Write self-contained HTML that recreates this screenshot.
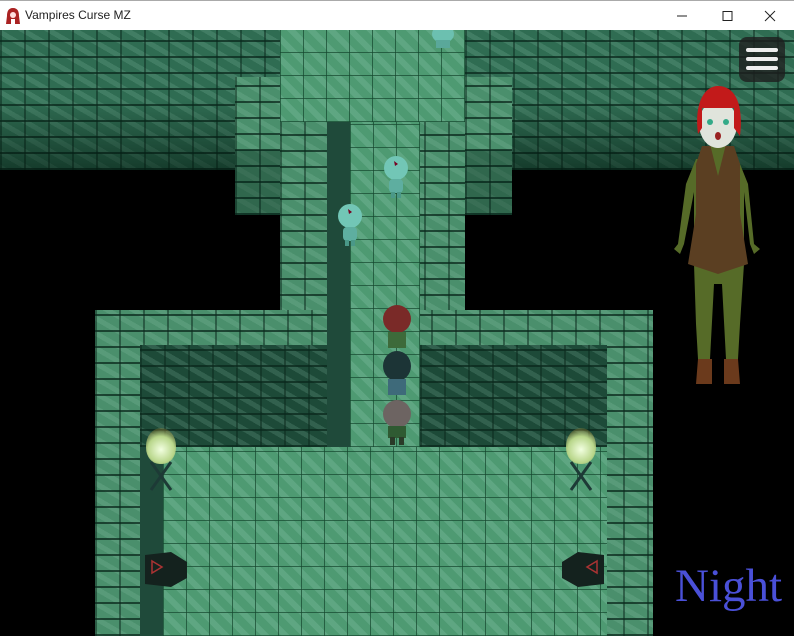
<!DOCTYPE html>
<html><head><meta charset="utf-8"><style>
*{margin:0;padding:0;box-sizing:border-box}
body{width:794px;height:636px;overflow:hidden;background:#000;position:relative;font-family:"Liberation Sans",sans-serif}
.tb{position:absolute;left:0;top:0;width:794px;height:30px;background:#fff;border-top:1px solid #aaa}
.tb span{position:absolute;left:25px;top:7px;font-size:12px;color:#222}
.d{position:absolute}
.wall{background-color:#2f6c52;background-image:
 repeating-linear-gradient(0deg,rgba(10,40,28,.75) 0 2px,transparent 2px 16px),
 repeating-linear-gradient(90deg,rgba(10,40,28,.5) 0 2px,transparent 2px 24px),
 repeating-linear-gradient(30deg,rgba(160,215,190,.16) 0 5px,transparent 5px 13px)}
.wall.dk{background-color:#1d4a38}
.wall.lt{background-color:#4a8f6c}
.floor{background-color:#4e9a72;background-image:
 repeating-linear-gradient(0deg,rgba(20,70,45,.7) 0 1px,transparent 1px 23px),
 repeating-linear-gradient(90deg,rgba(20,70,45,.7) 0 1px,transparent 1px 23px),
 repeating-linear-gradient(45deg,rgba(170,220,200,.18) 0 6px,transparent 6px 14px)}
.sh{background:#1f4a3a}
</style></head><body>
<div class="tb"><svg style="position:absolute;left:6px;top:7px" width="14" height="16"><path d="M7 0C2 0 1 4 1 8L0 16H5V11H9V16H14L13 8C13 4 12 0 7 0Z" fill="#a22"/><circle cx="7" cy="7" r="3" fill="#fdd"/></svg><span>Vampires Curse MZ</span>
<svg style="position:absolute;left:676px;top:8px" width="105" height="14"><path d="M1 7H11" stroke="#222"/><path d="M47 2.5h9v9h-9z" fill="none" stroke="#222"/><path d="M89 2l10 10M99 2l-10 10" stroke="#222"/></svg></div>

<!-- top walls -->
<div class="d wall" style="left:0;top:30px;width:280px;height:140px"></div>
<div class="d wall" style="left:465px;top:30px;width:329px;height:140px"></div>
<div class="d" style="left:0;top:100px;width:280px;height:70px;background:linear-gradient(transparent,rgba(0,20,12,.55))"></div>
<div class="d" style="left:512px;top:100px;width:282px;height:70px;background:linear-gradient(transparent,rgba(0,20,12,.55))"></div>
<div class="d floor" style="left:280px;top:30px;width:185px;height:92px"></div>
<div class="d wall lt" style="left:235px;top:77px;width:45px;height:138px"></div>
<div class="d wall lt" style="left:465px;top:77px;width:47px;height:138px"></div>
<div class="d" style="left:235px;top:150px;width:45px;height:65px;background:rgba(0,30,20,.35)"></div>
<div class="d" style="left:465px;top:150px;width:47px;height:65px;background:rgba(0,30,20,.35)"></div>
<!-- central column -->
<div class="d wall lt" style="left:280px;top:122px;width:185px;height:190px"></div>
<div class="d floor" style="left:350px;top:122px;width:70px;height:325px"></div>
<div class="d sh" style="left:327px;top:122px;width:23px;height:325px"></div>
<!-- bottom room -->
<div class="d wall lt" style="left:95px;top:310px;width:558px;height:326px"></div>
<div class="d floor" style="left:350px;top:310px;width:70px;height:137px"></div>
<div class="d sh" style="left:327px;top:310px;width:23px;height:137px"></div>
<div class="d wall dk" style="left:140px;top:345px;width:187px;height:102px"></div>
<div class="d wall dk" style="left:420px;top:345px;width:187px;height:102px"></div>
<div class="d floor" style="left:163px;top:447px;width:444px;height:189px"></div>
<div class="d sh" style="left:140px;top:447px;width:23px;height:189px"></div>

<!-- torches -->
<div class="d" style="left:146px;top:428px;width:30px;height:36px;border-radius:50% 50% 45% 45%;background:radial-gradient(circle at 50% 60%,#f2ffe0,#b8d68a 50%,rgba(160,140,60,.4) 75%,transparent)"></div>
<div class="d" style="left:566px;top:428px;width:30px;height:36px;border-radius:50% 50% 45% 45%;background:radial-gradient(circle at 50% 60%,#f2ffe0,#b8d68a 50%,rgba(160,140,60,.4) 75%,transparent)"></div>
<svg class="d" style="left:148px;top:460px" width="26" height="32"><path d="M3 2L23 30M23 2L3 30" stroke="#1d3a36" stroke-width="3"/></svg>
<svg class="d" style="left:568px;top:460px" width="26" height="32"><path d="M3 2L23 30M23 2L3 30" stroke="#1d3a36" stroke-width="3"/></svg>
<!-- plates -->
<svg class="d" style="left:141px;top:552px" width="48" height="36"><path d="M4 3L30 0L46 10V26L30 35L4 32Z" fill="#14221e"/><path d="M11 9L21 15L11 21Z" fill="none" stroke="#a33" stroke-width="1.5"/></svg>
<svg class="d" style="left:560px;top:552px" width="48" height="36"><path d="M44 3L18 0L2 10V26L18 35L44 32Z" fill="#14221e"/><path d="M37 9L27 15L37 21Z" fill="none" stroke="#a33" stroke-width="1.5"/></svg>

<!-- ghosts -->
<svg class="d" style="left:428px;top:30px" width="30" height="20"><ellipse cx="15" cy="4" rx="11" ry="9" fill="#6cc0b0"/><rect x="8" y="10" width="14" height="8" fill="#5aa89a"/></svg>
<svg class="d" style="left:381px;top:155px" width="30" height="44"><ellipse cx="15" cy="13" rx="12" ry="12" fill="#72c6b6"/><path d="M13 6l4 3-3 2z" fill="#702"/><rect x="8" y="24" width="14" height="14" rx="4" fill="#5eaea0"/><rect x="10" y="37" width="4" height="6" fill="#4a9888"/><rect x="16" y="37" width="4" height="6" fill="#4a9888"/></svg>
<svg class="d" style="left:335px;top:203px" width="30" height="44"><ellipse cx="15" cy="13" rx="12" ry="12" fill="#72c6b6"/><path d="M13 6l4 3-3 2z" fill="#702"/><rect x="8" y="24" width="14" height="14" rx="4" fill="#5eaea0"/><rect x="10" y="37" width="4" height="6" fill="#4a9888"/><rect x="16" y="37" width="4" height="6" fill="#4a9888"/></svg>
<!-- party -->
<svg class="d" style="left:380px;top:304px" width="34" height="142">
<ellipse cx="17" cy="15" rx="14" ry="14" fill="#7a2a28"/><rect x="8" y="28" width="18" height="16" fill="#3d6a3a"/>
<ellipse cx="17" cy="62" rx="14" ry="15" fill="#1c3436"/><rect x="8" y="75" width="18" height="16" fill="#3e6a7a"/>
<ellipse cx="17" cy="110" rx="14" ry="14" fill="#6d6462"/><rect x="8" y="122" width="18" height="12" fill="#2f5a32"/><rect x="10" y="133" width="5" height="8" fill="#2a3a28"/><rect x="19" y="133" width="5" height="8" fill="#2a3a28"/>
</svg>

<!-- menu button -->
<div class="d" style="left:739px;top:37px;width:46px;height:45px;border-radius:8px;background:rgba(30,30,30,.8)"></div>
<div class="d" style="left:746px;top:48px;width:32px;height:4px;border-radius:2px;background:#eee;box-shadow:0 9px 0 #eee,0 18px 0 #eee"></div>

<!-- character -->
<svg class="d" style="left:668px;top:84px" width="100" height="306">
<path d="M28 75L18 100L10 160L6 165L12 170L16 160L26 108V180L28 240L30 275H42L46 200L54 200L58 275H70L72 240L76 180V108L82 160L86 170L92 165L86 160L80 100L70 75Z" fill="#566b28"/>
<path d="M34 62L28 80V130L20 180L50 190L80 180L72 130V80L66 62Z" fill="#5b3f22"/>
<path d="M42 60H58L50 92Z" fill="#566b28"/>
<ellipse cx="50" cy="40" rx="19" ry="24" fill="#e0e4dc"/>
<path d="M30 50C26 20 36 2 50 2C66 2 76 18 72 52L66 44L66 24H34V44Z" fill="#c21a1a"/>
<circle cx="42" cy="38" r="3" fill="#3a8"/><circle cx="58" cy="38" r="3" fill="#3a8"/><ellipse cx="50" cy="52" rx="3" ry="4" fill="#922"/>
<path d="M30 275H44V300H28ZM56 275H70L72 300H56Z" fill="#6b3a1c"/>
</svg>

<div class="d" style="left:675px;top:559px;font-family:'Liberation Serif',serif;font-size:47px;color:#4a50d8">Night</div>
</body></html>
